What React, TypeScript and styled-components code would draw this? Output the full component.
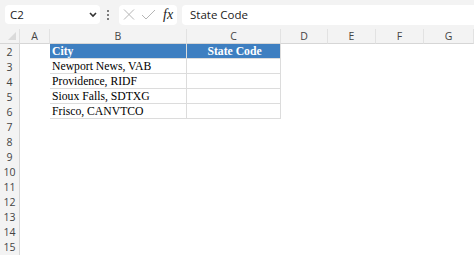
import React from "react";
import styled, { createGlobalStyle } from "styled-components";

const Global = createGlobalStyle`
  html, body { margin: 0; padding: 0; background: #ffffff; }
  body { width: 474px; height: 255px; overflow: hidden; }
`;

const Sheet = styled.div`
  width: 474px;
  height: 255px;
  background: linear-gradient(to right, #f3f3f3 19px, #d6d6d6 19px, #d6d6d6 20px, #ffffff 20px);
  font-family: "Open Sans", "Noto Sans", sans-serif;
  overflow: hidden;
`;

const FormulaBar = styled.div`
  display: flex;
  align-items: center;
  height: 29px;
  padding: 0 0 0 5px;
  background: #f3f3f3;
  box-sizing: border-box;
`;

const NameBox = styled.div`
  display: flex;
  align-items: center;
  justify-content: space-between;
  width: 95px;
  height: 19px;
  padding: 0 2px 0 5px;
  box-sizing: border-box;
  background: #ffffff;
  border-radius: 4px;
  font-size: 11.5px;
  color: #222;
`;

const Dots = styled.div`
  display: flex;
  flex-direction: column;
  gap: 2px;
  margin: 0 10px 0 7px;
  span {
    width: 2px;
    height: 2px;
    background: #555;
    border-radius: 1px;
  }
`;

const ButtonGroup = styled.div`
  display: flex;
  align-items: center;
  gap: 6px;
  width: 58px;
  height: 20px;
  padding: 0 2px 0 4px;
  box-sizing: border-box;
  background: #ffffff;
  border-radius: 4px;
`;

const Fx = styled.span`
  font-family: "Liberation Serif", serif;
  font-style: italic;
  font-size: 14px;
  color: #222;
  margin-left: 1px;
`;

const FormulaInput = styled.div`
  flex: 1;
  height: 20px;
  margin-left: 5px;
  padding-left: 8px;
  display: flex;
  align-items: center;
  background: #ffffff;
  border-radius: 4px 0 0 4px;
  font-size: 11.5px;
  color: #222;
`;

const Grid = styled.div`
  display: grid;
  grid-template-columns: 20px 30px 137px 94px 47px 48px 48px 50px;
  grid-template-rows: 15px;
  grid-auto-rows: 15px;
`;

const Corner = styled.div`
  background: #f3f3f3;
  border-bottom: 1px solid #d6d6d6;
  border-right: 1px solid #e0e0e0;
  position: relative;
  &::after {
    content: "";
    position: absolute;
    right: 3px;
    bottom: 3px;
    border-style: solid;
    border-width: 0 0 8px 8px;
    border-color: transparent transparent #dadada transparent;
  }
`;

const ColHead = styled.div`
  background: #f3f3f3;
  border-bottom: 1px solid #d6d6d6;
  border-right: 1px solid #e2e2e2;
  display: flex;
  align-items: center;
  justify-content: center;
  font-size: 10.5px;
  color: #444;
  box-sizing: border-box;
`;

const RowHead = styled.div`
  background: #f3f3f3;
  border-right: 1px solid #d6d6d6;
  display: flex;
  align-items: center;
  justify-content: center;
  font-size: 10.5px;
  color: #444;
  box-sizing: border-box;
`;

const Cell = styled.div<{ $head?: boolean; $table?: boolean; $center?: boolean }>`
  box-sizing: border-box;
  display: flex;
  align-items: center;
  justify-content: ${(p) => (p.$center ? "center" : "flex-start")};
  padding-left: 2px;
  font-family: "Liberation Serif", "Times New Roman", serif;
  font-size: 11.7px;
  font-weight: ${(p) => (p.$head ? 700 : 400)};
  color: ${(p) => (p.$head ? "#ffffff" : "#000000")};
  background: ${(p) => (p.$head ? "#3e7fc1" : "#ffffff")};
  border-right: ${(p) => (p.$table ? "1px solid #dcdcdc" : "none")};
  border-bottom: ${(p) => (p.$table ? "1px solid #dcdcdc" : "none")};
  white-space: nowrap;
`;

const cols = ["A", "B", "C", "D", "E", "F", "G"];
const cities = ["Newport News, VAB", "Providence, RIDF", "Sioux Falls, SDTXG", "Frisco, CANVTCO"];

export default function App() {
  const rows = [];
  for (let r = 2; r <= 15; r++) {
    const idx = r - 3;
    rows.push(
      <React.Fragment key={r}>
        <RowHead>{r}</RowHead>
        <Cell />
        {r === 2 ? (
          <>
            <Cell $head $table>City</Cell>
            <Cell $head $table $center>State Code</Cell>
          </>
        ) : idx >= 0 && idx < cities.length ? (
          <>
            <Cell $table>{cities[idx]}</Cell>
            <Cell $table />
          </>
        ) : (
          <>
            <Cell />
            <Cell />
          </>
        )}
        <Cell />
        <Cell />
        <Cell />
        <Cell />
      </React.Fragment>
    );
  }

  return (
    <Sheet>
      <Global />
      <FormulaBar>
        <NameBox>
          C2
          <svg width="10" height="8" viewBox="0 0 10 8">
            <path d="M2 2 L5 5 L8 2" fill="none" stroke="#333" strokeWidth="1.6" />
          </svg>
        </NameBox>
        <Dots>
          <span />
          <span />
          <span />
        </Dots>
        <ButtonGroup>
          <svg width="12" height="11" viewBox="0 0 12 11">
            <path d="M1 0.5 L11 10.5 M11 0.5 L1 10.5" stroke="#b5b5b5" strokeWidth="1" />
          </svg>
          <svg width="15" height="11" viewBox="0 0 15 11">
            <path d="M1 6 L5 10 L14 1" fill="none" stroke="#b5b5b5" strokeWidth="1" />
          </svg>
          <Fx>fx</Fx>
        </ButtonGroup>
        <FormulaInput>State Code</FormulaInput>
      </FormulaBar>
      <Grid>
        <Corner />
        {cols.map((c) => (
          <ColHead key={c}>{c}</ColHead>
        ))}
        {rows}
      </Grid>
    </Sheet>
  );
}
